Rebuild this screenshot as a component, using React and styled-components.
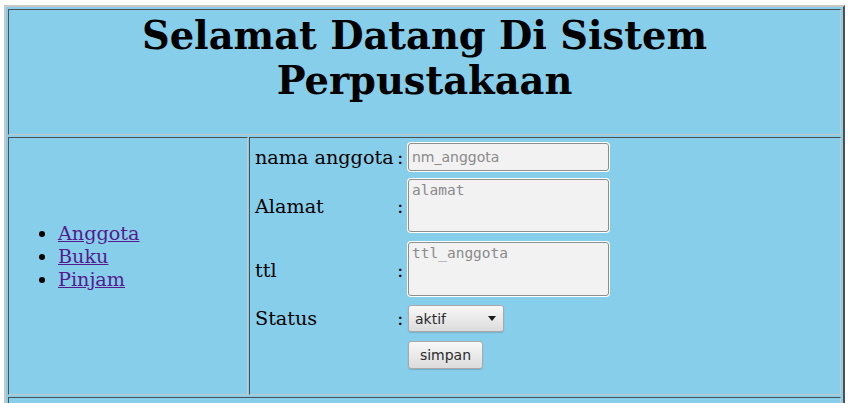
import styled, { createGlobalStyle } from "styled-components";

const GlobalStyle = createGlobalStyle`
  body {
    margin: 0;
    background: #ffffff;
    font-family: "DejaVu Serif", serif;
    font-size: 19.2px;
    color: #000;
  }
`;

const Page = styled.div`
  padding: 5px 0 0 4px;
`;

const Frame = styled.div`
  width: 841px;
  box-sizing: border-box;
  display: grid;
  grid-template-columns: 240px 1fr;
  grid-template-rows: 126px 258px 40px;
  column-gap: 1px;
  row-gap: 2px;
  padding: 2px;
  background: #87ceeb;
  border: 2px solid;
  border-color: #c8c8c8 #4f4f4f #4f4f4f #c8c8c8;
`;

const Cell = styled.div`
  grid-column: ${(p) => (p.$wide ? "1 / 3" : "auto")};
  border: 1px solid;
  border-color: #4f4f4f #c8c8c8 #c8c8c8 #4f4f4f;
  padding: 1px;
  min-width: 0;
`;

const HeadCell = styled(Cell)`
  padding-top: 3px;
`;

const MenuCell = styled(Cell)`
  display: flex;
  align-items: center;
  padding-bottom: 20px;
`;

const Title = styled.h1`
  margin: 0;
  font-size: 38.4px;
  font-weight: bold;
  text-align: center;
`;

const Menu = styled.ul`
  margin: 0;
  padding-left: 48px;
  list-style: disc;
`;

const MenuLink = styled.a`
  color: #551a8b;
  text-decoration: underline;
`;

const Form = styled.form`
  display: grid;
  grid-template-columns: 142px 10px auto;
  row-gap: 6px;
  align-items: center;
  justify-items: start;
  padding: 3px 0 0 4px;
`;

const Label = styled.span`
  white-space: nowrap;
`;

const Colon = styled.span``;

const TextBox = styled.input`
  box-sizing: border-box;
  width: 201px;
  height: 28px;
  margin: 1px;
  padding: 0 3px;
  border: 1px solid #8e8e8e;
  border-radius: 3px;
  background: #f2f2f2;
  box-shadow: 0 0 0 1px #fff;
  font-family: "DejaVu Sans", sans-serif;
  font-size: 14px;
  outline: none;

  &::placeholder {
    color: #8a8a8a;
  }
`;

const TextArea = styled.textarea`
  box-sizing: border-box;
  width: 201px;
  height: ${(p) => p.$h}px;
  margin: 1px 1px 3px;
  padding: 2px 3px;
  border: 1px solid #8e8e8e;
  border-radius: 3px;
  background: #f2f2f2;
  box-shadow: 0 0 0 1px #fff;
  font-family: "DejaVu Sans Mono", monospace;
  font-size: 14.5px;
  resize: none;
  outline: none;

  &::placeholder {
    color: #8a8a8a;
  }
`;

const SelectWrap = styled.div`
  position: relative;
  margin-left: 1px;

  &::after {
    content: "";
    position: absolute;
    right: 8px;
    top: 11px;
    border-left: 4px solid transparent;
    border-right: 4px solid transparent;
    border-top: 5px solid #1a1a1a;
    pointer-events: none;
  }
`;

const Select = styled.select`
  appearance: none;
  box-sizing: border-box;
  width: 96px;
  height: 27px;
  padding: 0 0 0 6px;
  border: 1px solid #a9a9a9;
  border-radius: 3px;
  background: linear-gradient(#f8f8f8, #dcdcdc);
  box-shadow: 0 1px 1px rgba(0, 0, 0, 0.15);
  font-family: "DejaVu Sans", sans-serif;
  font-size: 14px;
  color: #2b2b2b;
  outline: none;
`;

const Button = styled.button`
  grid-column: 3;
  box-sizing: border-box;
  width: 75px;
  height: 28px;
  margin: 3px 0 0 1px;
  border: 1px solid #a9a9a9;
  border-radius: 3px;
  background: linear-gradient(#f8f8f8, #dcdcdc);
  box-shadow: 0 1px 1px rgba(0, 0, 0, 0.15);
  font-family: "DejaVu Sans", sans-serif;
  font-size: 14px;
  color: #2b2b2b;
`;

export default function App() {
  return (
    <Page>
      <GlobalStyle />
      <Frame>
        <HeadCell $wide>
          <Title>
            Selamat Datang Di Sistem
            <br />
            Perpustakaan
          </Title>
        </HeadCell>
        <MenuCell>
          <Menu>
            <li><MenuLink href="#anggota">Anggota</MenuLink></li>
            <li><MenuLink href="#buku">Buku</MenuLink></li>
            <li><MenuLink href="#pinjam">Pinjam</MenuLink></li>
          </Menu>
        </MenuCell>
        <Cell>
          <Form onSubmit={(e) => e.preventDefault()}>
            <Label>nama anggota</Label>
            <Colon>:</Colon>
            <TextBox placeholder="nm_anggota" />

            <Label>Alamat</Label>
            <Colon>:</Colon>
            <TextArea $h={53} placeholder="alamat" />

            <Label>ttl</Label>
            <Colon>:</Colon>
            <TextArea $h={54} placeholder="ttl_anggota" />

            <Label>Status</Label>
            <Colon>:</Colon>
            <SelectWrap>
              <Select defaultValue="aktif">
                <option value="aktif">aktif</option>
                <option value="tidak aktif">tidak aktif</option>
              </Select>
            </SelectWrap>

            <Button type="submit">simpan</Button>
          </Form>
        </Cell>
        <Cell $wide />
      </Frame>
    </Page>
  );
}
